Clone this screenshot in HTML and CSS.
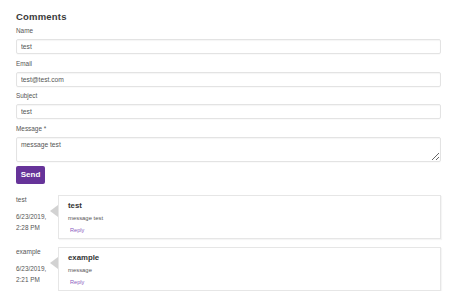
FILE: index.html
```html
<!DOCTYPE html>
<html>
<head>
<meta charset="utf-8">
<link rel="stylesheet" href="styles.css">
</head>
<body>
<div class="page">
  <h2 class="title">Comments</h2>
  <form class="form">
    <div class="field">
      <label class="label">Name</label>
      <input class="input" type="text" value="test">
    </div>
    <div class="field">
      <label class="label">Email</label>
      <input class="input" type="text" value="test@test.com">
    </div>
    <div class="field">
      <label class="label">Subject</label>
      <input class="input" type="text" value="test">
    </div>
    <div class="field">
      <label class="label">Message *</label>
      <textarea class="textarea">message test</textarea>
    </div>
    <button class="send" type="button">Send</button>
  </form>

  <div class="comments">
    <div class="comment">
      <div class="meta">
        <div class="author">test</div>
        <div class="date">6/23/2019, 2:28 PM</div>
      </div>
      <div class="arrow"></div>
      <div class="card">
        <div class="card-title">test</div>
        <div class="card-text">message test</div>
        <div class="reply">Reply</div>
      </div>
    </div>
    <div class="comment">
      <div class="meta">
        <div class="author">example</div>
        <div class="date">6/23/2019, 2:21 PM</div>
      </div>
      <div class="arrow"></div>
      <div class="card">
        <div class="card-title">example</div>
        <div class="card-text">message</div>
        <div class="reply">Reply</div>
      </div>
    </div>
  </div>
</div>
</body>
</html>
```
FILE: styles.css
```css
* { box-sizing: border-box; }
html, body { margin: 0; padding: 0; background: #fff; }
body { font-family: "Liberation Sans", Arial, sans-serif; color: #555; }

.page { padding: 11px 33px 0 16px; width: 474px; }

.title {
  margin: 0 0 3px;
  font-size: 9.5px;
  line-height: 12px;
  font-weight: bold;
  color: #3a3a3a;
  letter-spacing: 0.2px;
}

.form { display: flex; flex-direction: column; }
.field { display: flex; flex-direction: column; margin-bottom: 4.5px; }
.label {
  font-size: 6.4px;
  line-height: 10px;
  margin-bottom: 3px;
  color: #555;
}
.input, .textarea {
  width: 100%;
  border: 1px solid #e3e3e3;
  border-radius: 2px;
  box-shadow: inset 0 1px 1px rgba(0,0,0,0.04), 0 1px 0 rgba(0,0,0,0.02);
  font-family: "Liberation Sans", Arial, sans-serif;
  font-size: 6.7px;
  color: #555;
  padding: 0 4px;
  margin: 0;
  outline: none;
}
.input { height: 15px; }
.textarea { height: 25px; padding-top: 3px; resize: vertical; display: block; }
.field:last-of-type { margin-bottom: 4px; }

.send {
  align-self: flex-start;
  width: 29px;
  height: 18px;
  background: #663399;
  color: #fff;
  border: none;
  border-radius: 2px;
  font-family: "Liberation Sans", Arial, sans-serif;
  font-weight: bold;
  font-size: 8px;
  padding: 0;
}

.comments { margin-top: 11px; display: flex; flex-direction: column; gap: 8px; }
.comment { display: flex; align-items: flex-start; }
.meta { width: 35px; color: #555; line-height: 11px; }
.author { font-size: 6.5px; margin-top: -1px; margin-bottom: 6px; }
.date { font-size: 6.4px; }
.arrow {
  width: 0; height: 0;
  margin-top: 10.5px;
  margin-left: -1px;
  border-top: 6px solid transparent;
  border-bottom: 6px solid transparent;
  border-right: 8px solid #d2d2d2;
}
.card {
  flex: 1;
  height: 44px;
  border: 1px solid #e6e6e6;
  box-shadow: 1px 1px 1px rgba(0,0,0,0.04);
  padding: 5px 9px 0;
}
.card-title { font-size: 7.8px; font-weight: bold; color: #333; line-height: 10px; }
.card-text { font-size: 5.9px; line-height: 8px; margin-top: 3px; color: #555; }
.reply { font-size: 5.6px; line-height: 8px; margin-top: 4px; padding-left: 2px; color: #8a5cc0; }
```
